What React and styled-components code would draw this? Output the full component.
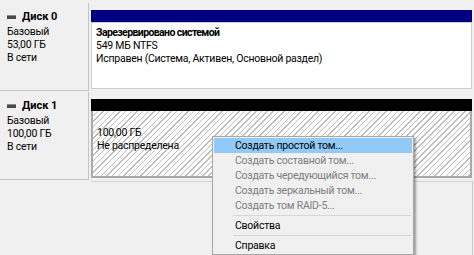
import React from 'react';
import styled, { createGlobalStyle } from 'styled-components';

const GlobalStyle = createGlobalStyle`
  html, body {
    margin: 0;
    padding: 0;
    background: #f0f0f0;
  }
  body {
    font-family: Roboto, "Noto Sans", sans-serif;
    font-size: 10.5px;
    letter-spacing: -0.25px;
    color: #000;
  }
`;

const disks = [
  {
    id: 0,
    name: 'Диск 0',
    lines: ['Базовый', '53,00 ГБ', 'В сети'],
    volume: {
      strip: '#000080',
      hatched: false,
      padTop: 3,
      title: 'Зарезервировано системой',
      lines: ['549 МБ NTFS', 'Исправен (Система, Активен, Основной раздел)'],
    },
  },
  {
    id: 1,
    name: 'Диск 1',
    lines: ['Базовый', '100,00 ГБ', 'В сети'],
    volume: {
      strip: '#000000',
      hatched: true,
      padTop: 15,
      lines: ['100,00 ГБ', 'Не распределена'],
    },
  },
];

const menuItems = [
  { label: 'Создать простой том...', active: true },
  { label: 'Создать составной том...', disabled: true },
  { label: 'Создать чередующийся том...', disabled: true },
  { label: 'Создать зеркальный том...', disabled: true },
  { label: 'Создать том RAID-5...', disabled: true },
  { separator: true },
  { label: 'Свойства' },
  { separator: true },
  { label: 'Справка' },
];

const Page = styled.div`
  position: relative;
  width: 474px;
  height: 255px;
  padding-top: 3px;
  box-sizing: border-box;
  overflow: hidden;
  display: flex;
  flex-direction: column;
  gap: 1px;
`;

const DiskRow = styled.div`
  display: grid;
  grid-template-columns: 89px 1fr;
  column-gap: 2px;
  height: 88px;
  padding-right: 2px;
`;

const DiskLabel = styled.div`
  border-right: 1px solid #c4c4c4;
  border-bottom: 1px solid #c4c4c4;
  padding: 7px 0 0 7px;
  line-height: 13px;
`;

const DiskTitle = styled.div`
  display: flex;
  align-items: center;
  gap: 6px;
  font-weight: 700;
  font-size: 11px;
  letter-spacing: 0;
  margin-bottom: 2px;
`;

const Line = styled.div`
  white-space: nowrap;
`;

const Volumes = styled.div`
  display: flex;
  padding: 7px 0 2px;
`;

const Partition = styled.div`
  flex: 1;
  display: flex;
  flex-direction: column;
`;

const Strip = styled.div`
  height: 12px;
  background: ${(p) => p.$color};
`;

const Body = styled.div`
  flex: 1;
  line-height: 13px;
  padding: ${(p) => p.$padTop}px 4px 0;
  border: ${(p) => (p.$hatched ? '2px solid #a9a9a9' : '1px solid #cdcdcd')};
  border-top-width: ${(p) => (p.$hatched ? '0' : '1px')};
  background: ${(p) =>
    p.$hatched
      ? 'repeating-linear-gradient(135deg, #ffffff 0 3px, #bcbcbc 3px 4px)'
      : '#ffffff'};
`;

const VolumeTitle = styled.div`
  font-weight: 700;
  letter-spacing: -0.6px;
`;

const EmptyRow = styled.div`
  flex: 1;
  display: grid;
  grid-template-columns: 89px 1fr;
  column-gap: 2px;
  padding-right: 1px;
`;

const EmptyArea = styled.div`
  border-top: 1px solid #d2d2d2;
  border-right: 1px solid #c8c8c8;
`;

const Menu = styled.div`
  position: absolute;
  left: 212px;
  top: 136px;
  width: 198px;
  padding: 1px;
  background: #f0f0f0;
  border: 1px solid #a8a8a8;
  box-shadow: 2px 2px 2px rgba(0, 0, 0, 0.35);
`;

const MenuItem = styled.div`
  height: 15px;
  line-height: 15px;
  padding-left: 21px;
  white-space: nowrap;
  color: ${(p) => (p.$disabled ? '#7d7d7d' : '#000')};
  background: ${(p) => (p.$active ? '#91c9f7' : 'transparent')};
`;

const Separator = styled.div`
  height: 1px;
  margin: 2px 1px 2px 19px;
  background: #d7d7d7;
`;

const DiskIcon = () => (
  <svg width="9" height="4" viewBox="0 0 9 4">
    <rect x="0" y="0" width="9" height="4" fill="#4a4a4a" />
    <rect x="0" y="0" width="9" height="1" fill="#8a8a8a" />
  </svg>
);

export default function App() {
  return (
    <>
      <GlobalStyle />
      <Page>
        {disks.map((disk) => (
          <DiskRow key={disk.id}>
            <DiskLabel>
              <DiskTitle>
                <DiskIcon />
                {disk.name}
              </DiskTitle>
              {disk.lines.map((l) => (
                <Line key={l}>{l}</Line>
              ))}
            </DiskLabel>
            <Volumes>
              <Partition>
                <Strip $color={disk.volume.strip} />
                <Body $hatched={disk.volume.hatched} $padTop={disk.volume.padTop}>
                  {disk.volume.title && <VolumeTitle>{disk.volume.title}</VolumeTitle>}
                  {disk.volume.lines.map((l) => (
                    <Line key={l}>{l}</Line>
                  ))}
                </Body>
              </Partition>
            </Volumes>
          </DiskRow>
        ))}
        <EmptyRow>
          <div />
          <EmptyArea />
        </EmptyRow>
        <Menu>
          {menuItems.map((item, i) =>
            item.separator ? (
              <Separator key={i} />
            ) : (
              <MenuItem key={i} $active={item.active} $disabled={item.disabled}>
                {item.label}
              </MenuItem>
            )
          )}
        </Menu>
      </Page>
    </>
  );
}
